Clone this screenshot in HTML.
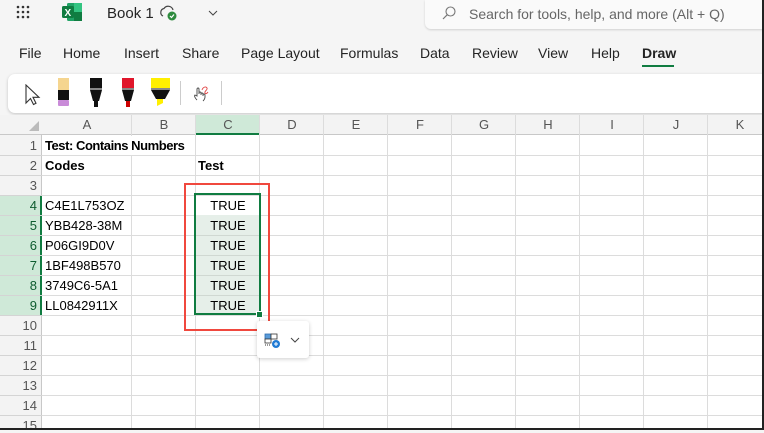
<!DOCTYPE html><html><head><style>
*{margin:0;padding:0;box-sizing:border-box}
body{width:764px;height:430px;overflow:hidden;background:#f5f5f5;font-family:"Liberation Sans",sans-serif;position:relative;color:#242424}
.a{position:absolute}
.tab{position:absolute;top:45px;font-size:14px;color:#242424}
.cell{position:absolute;font-size:13px;color:#000;white-space:nowrap}
.rh{position:absolute;left:0;width:40px;text-align:right;font-size:13px;color:#555;padding-right:3px}
.ch{position:absolute;top:117px;font-size:13px;color:#555;text-align:center;width:64px}
</style></head><body>
<div class="a" style="left:16px;top:5px;width:14px;height:14px">
<svg width="14" height="14"><g fill="#333"><circle cx="2" cy="2" r="1.3"/><circle cx="7" cy="2" r="1.3"/><circle cx="12" cy="2" r="1.3"/><circle cx="2" cy="7" r="1.3"/><circle cx="7" cy="7" r="1.3"/><circle cx="12" cy="7" r="1.3"/><circle cx="2" cy="12" r="1.3"/><circle cx="7" cy="12" r="1.3"/><circle cx="12" cy="12" r="1.3"/></g></svg></div>
<svg class="a" style="left:62px;top:2px" width="20" height="20"><rect x="5" y="1" width="15" height="18" rx="1.5" fill="#21a366"/><rect x="12" y="1" width="8" height="9" fill="#33c481"/><rect x="12" y="10" width="8" height="9" fill="#107c41"/><rect x="0" y="4" width="12" height="12" rx="1.5" fill="#107c41"/><text x="2.5" y="14" font-size="10" font-weight="bold" fill="#fff" font-family="Liberation Sans">X</text></svg>
<div class="a" style="left:107px;top:5px;font-size:15px">Book 1</div>
<svg class="a" style="left:159px;top:4px" width="20" height="18"><path d="M4 12a4 4 0 0 1 1-7.5 5 5 0 0 1 9 1.5" fill="none" stroke="#444" stroke-width="1.2"/><circle cx="13" cy="12" r="4.5" fill="#2e8b3e"/><path d="M11 12l1.5 1.5 2.5-3" stroke="#fff" stroke-width="1.2" fill="none"/></svg>
<svg class="a" style="left:208px;top:10px" width="10" height="6"><path d="M1 1l4 4 4-4" stroke="#444" fill="none"/></svg>
<div class="a" style="left:425px;top:0;width:339px;height:29px;background:#fafafa;border-radius:0 0 0 6px;box-shadow:0 1px 2px rgba(0,0,0,.15)"></div>
<svg class="a" style="left:442px;top:6px" width="14" height="14"><circle cx="8.5" cy="5.5" r="4.5" fill="none" stroke="#777" stroke-width="1.1"/><path d="M5.3 8.7L1 13" stroke="#777" stroke-width="1.2"/></svg>
<div class="a" style="left:469px;top:6px;font-size:14px;color:#666">Search for tools, help, and more (Alt + Q)</div>
<div class="tab" style="left:19px">File</div>
<div class="tab" style="left:63px">Home</div>
<div class="tab" style="left:124px">Insert</div>
<div class="tab" style="left:182px">Share</div>
<div class="tab" style="left:241px">Page Layout</div>
<div class="tab" style="left:340px">Formulas</div>
<div class="tab" style="left:420px">Data</div>
<div class="tab" style="left:472px">Review</div>
<div class="tab" style="left:538px">View</div>
<div class="tab" style="left:591px">Help</div>
<div class="tab" style="left:642px;font-weight:bold">Draw</div>
<div class="a" style="left:642px;top:65px;width:32px;height:2px;background:#107c41"></div>
<div class="a" style="left:8px;top:74px;width:770px;height:39px;background:#fff;border-radius:7px;box-shadow:0 1px 3px rgba(0,0,0,.2)"></div>
<svg class="a" style="left:24px;top:84px" width="18" height="22"><path d="M2 1v18l4.5-4.5 3 6 2.5-1.2-3-6h6z" fill="#fff" stroke="#333" stroke-width="1.1"/></svg>
<svg class="a" style="left:57px;top:78px" width="14" height="30"><rect x="1" y="0" width="11" height="12" fill="#f5d58f"/><rect x="1" y="12" width="11" height="10" fill="#111"/><rect x="1" y="22" width="11" height="6" rx="1" fill="#c98bd8"/></svg>
<svg class="a" style="left:89px;top:78px" width="14" height="31"><rect x="1" y="0" width="12" height="10" fill="#111"/><rect x="1" y="10" width="12" height="2" fill="#888"/><path d="M1 12h12l-3 11H4z" fill="#111"/><rect x="5" y="23" width="4" height="6" fill="#111"/></svg>
<svg class="a" style="left:121px;top:78px" width="14" height="31"><rect x="1" y="0" width="12" height="10" fill="#e0162b"/><rect x="1" y="10" width="12" height="2" fill="#888"/><path d="M1 12h12l-3 11H4z" fill="#111"/><rect x="5" y="23" width="4" height="6" fill="#c00"/></svg>
<svg class="a" style="left:150px;top:78px" width="20" height="31"><rect x="1" y="0" width="19" height="10" fill="#ffef00"/><rect x="1" y="10" width="19" height="2" fill="#888"/><path d="M1 12h19l-5 9H6z" fill="#111"/><path d="M7 21h6v4l-6 3z" fill="#ffef00"/></svg>
<div class="a" style="left:180px;top:81px;width:1px;height:24px;background:#ccc"></div>
<svg class="a" style="left:192px;top:84px" width="18" height="18"><path d="M10 6c1-3 4-4 5-2s-3 3-2 5 3-1 3-1" stroke="#e04040" fill="none" stroke-width="0.9"/><path d="M5 16c-2-2-3-4-2-5l2 1V5a1 1 0 0 1 2 0v5 M7 9a1 1 0 0 1 2 0v2 M9 10a1 1 0 0 1 2 0v2 M11 11a1 1 0 0 1 2 0v2c0 2-1 3-2 4" stroke="#444" fill="none" stroke-width="0.9"/></svg>
<div class="a" style="left:221px;top:81px;width:1px;height:24px;background:#ccc"></div>
<div class="a" style="left:0;top:115px;width:764px;height:315px;background:#fff"></div>
<div class="a" style="left:0;top:115px;width:42px;height:315px;background:#f3f3f3;border-right:1px solid #c8c8c8"></div>
<div class="a" style="left:0;top:115px;width:764px;height:20px;background:#f3f3f3;border-bottom:1px solid #c8c8c8"></div>
<svg class="a" style="left:28px;top:120px" width="12" height="12"><path d="M11 1v10H1z" fill="#bbb"/></svg>
<div class="a" style="left:196px;top:115px;width:64px;height:20px;background:#cfe9d8;border-bottom:2px solid #107c41"></div>
<div class="a" style="left:0;top:195px;width:42px;height:120px;background:#cfe9d8;border-right:2px solid #107c41"></div>
<svg class="a" style="left:0;top:115px" width="764" height="315">
<g stroke="#dcdcdc" stroke-width="1">
<path d="M131.5 0v315M195.5 0v315M259.5 0v315M323.5 0v315M387.5 0v315M451.5 0v315M515.5 0v315M579.5 0v315M643.5 0v315M707.5 0v315"/>
<path d="M42 40.5h722M42 60.5h722M42 80.5h722M42 100.5h722M42 120.5h722M42 140.5h722M42 160.5h722M42 180.5h722M42 200.5h722M42 220.5h722M42 240.5h722M42 260.5h722M42 280.5h722M42 300.5h722"/>
<path d="M0 40.5h42M0 60.5h42M0 80.5h42M0 100.5h42M0 120.5h42M0 140.5h42M0 160.5h42M0 180.5h42M0 200.5h42M0 220.5h42M0 240.5h42M0 260.5h42M0 280.5h42M0 300.5h42" stroke="#d4d4d4"/>
</g></svg>
<div class="a" style="left:43px;top:136px;width:152px;height:19px;background:#fff"></div>
<div class="ch" style="left:55px">A</div><div class="ch" style="left:132px">B</div><div class="ch" style="left:196px">C</div><div class="ch" style="left:260px">D</div><div class="ch" style="left:324px">E</div><div class="ch" style="left:388px">F</div><div class="ch" style="left:452px">G</div><div class="ch" style="left:516px">H</div><div class="ch" style="left:580px">I</div><div class="ch" style="left:644px">J</div><div class="ch" style="left:708px">K</div>
<div class="rh" style="top:138px">1</div><div class="rh" style="top:158px">2</div><div class="rh" style="top:178px">3</div><div class="rh" style="top:198px;color:#0e5c2f">4</div><div class="rh" style="top:218px;color:#0e5c2f">5</div><div class="rh" style="top:238px;color:#0e5c2f">6</div><div class="rh" style="top:258px;color:#0e5c2f">7</div><div class="rh" style="top:278px;color:#0e5c2f">8</div><div class="rh" style="top:298px;color:#0e5c2f">9</div><div class="rh" style="top:318px">10</div><div class="rh" style="top:338px">11</div><div class="rh" style="top:358px">12</div><div class="rh" style="top:378px">13</div><div class="rh" style="top:398px">14</div><div class="rh" style="top:418px">15</div>
<div class="cell" style="left:45px;top:138px;font-weight:bold;letter-spacing:-0.45px">Test: Contains Numbers</div>
<div class="cell" style="left:45px;top:158px;font-weight:bold">Codes</div>
<div class="cell" style="left:198px;top:158px;font-weight:bold">Test</div>
<div class="cell" style="left:45px;top:198px">C4E1L753OZ</div>
<div class="cell" style="left:45px;top:218px">YBB428-38M</div>
<div class="cell" style="left:45px;top:238px">P06GI9D0V</div>
<div class="cell" style="left:45px;top:258px">1BF498B570</div>
<div class="cell" style="left:45px;top:278px">3749C6-5A1</div>
<div class="cell" style="left:45px;top:298px">LL0842911X</div>
<div class="a" style="left:196px;top:215px;width:63px;height:99px;background:#e6efe9"></div>
<svg class="a" style="left:196px;top:215px" width="64" height="100"><path d="M0 20.5h64M0 40.5h64M0 60.5h64M0 80.5h64" stroke="#d0d8d2"/></svg>
<div class="cell" style="left:196px;width:64px;text-align:center;top:198px">TRUE</div>
<div class="cell" style="left:196px;width:64px;text-align:center;top:218px">TRUE</div>
<div class="cell" style="left:196px;width:64px;text-align:center;top:238px">TRUE</div>
<div class="cell" style="left:196px;width:64px;text-align:center;top:258px">TRUE</div>
<div class="cell" style="left:196px;width:64px;text-align:center;top:278px">TRUE</div>
<div class="cell" style="left:196px;width:64px;text-align:center;top:298px">TRUE</div>
<div class="a" style="left:194px;top:193px;width:67px;height:122px;border:2px solid #107c41"></div>
<div class="a" style="left:257px;top:312px;width:5px;height:5px;background:#107c41;outline:1px solid #fff"></div>
<div class="a" style="left:184px;top:183px;width:86px;height:148px;border:2px solid #f0483e"></div>
<div class="a" style="left:257px;top:321px;width:52px;height:37px;background:#fff;border-radius:3px;box-shadow:0 1px 4px rgba(0,0,0,.2)"></div>
<svg class="a" style="left:264px;top:333px" width="18" height="16"><rect x="1" y="1" width="6" height="5" fill="#5a9bd8" stroke="#2b6cb0" stroke-width=".8"/><rect x="7" y="1" width="6" height="5" fill="#fff" stroke="#333" stroke-width=".8"/><rect x="1" y="6" width="6" height="4" fill="#fff" stroke="#333" stroke-width=".8"/><path d="M1 12h6" stroke="#333" stroke-dasharray="1 1"/><circle cx="12" cy="11" r="4" fill="#1f7ad4"/><path d="M12 9v4M10 11h4" stroke="#fff"/></svg>
<svg class="a" style="left:290px;top:337px" width="10" height="6"><path d="M1 1l4 4 4-4" stroke="#444" fill="none"/></svg>
<div class="a" style="left:0;top:0;width:764px;height:430px;border-right:2px solid #222;border-bottom:2px solid #222"></div>
</body></html>
